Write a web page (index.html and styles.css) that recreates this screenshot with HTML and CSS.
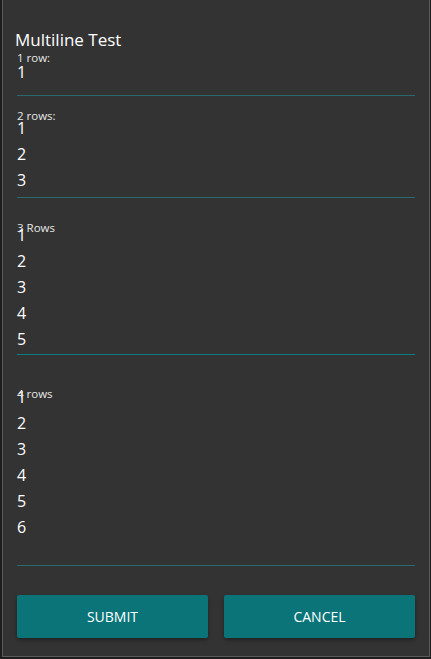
FILE: index.html
```html
<!DOCTYPE html>
<html lang="en">
<head>
<meta charset="utf-8">
<title>Multiline Test</title>
<link rel="stylesheet" href="styles.css">
</head>
<body>
<div class="window">
  <div class="title">Multiline Test</div>

  <div class="field field-1">
    <div class="label label-1">1 row:</div>
    <div class="value">
      <div class="line">1</div>
    </div>
  </div>

  <div class="field field-2">
    <div class="label label-2">2 rows:</div>
    <div class="value">
      <div class="line">1</div>
      <div class="line">2</div>
      <div class="line">3</div>
    </div>
  </div>

  <div class="field field-3 focused">
    <div class="label label-3">3 Rows</div>
    <div class="value">
      <div class="line">1</div>
      <div class="line">2</div>
      <div class="line">3</div>
      <div class="line">4</div>
      <div class="line">5</div>
    </div>
  </div>

  <div class="field field-4">
    <div class="label label-4">4 rows</div>
    <div class="value">
      <div class="line">1</div>
      <div class="line">2</div>
      <div class="line">3</div>
      <div class="line">4</div>
      <div class="line">5</div>
      <div class="line">6</div>
    </div>
  </div>

  <div class="actions">
    <button class="btn">SUBMIT</button>
    <button class="btn">CANCEL</button>
  </div>
</div>
</body>
</html>
```

FILE: styles.css
```css
* {
  box-sizing: border-box;
}

html, body {
  margin: 0;
  padding: 0;
  background: #1e1e1e;
}

body {
  font-family: "Open Sans", "Noto Sans", sans-serif;
  color: #ffffff;
  width: 431px;
  height: 659px;
  overflow: hidden;
}

.window {
  margin-left: 2px;
  width: 428px;
  height: 657px;
  background: #333333;
  border-left: 1px solid #5a5a5a;
  border-right: 1px solid #5a5a5a;
  border-bottom: 1px solid #5a5a5a;
  padding: 27px 14px 0 14px;
  display: flex;
  flex-direction: column;
}

.title {
  font-size: 17px;
  line-height: 24px;
  height: 24px;
  margin-left: -2px;
  padding-top: 1px;
  color: #ffffff;
}

.field {
  position: relative;
  border-bottom: 1px solid #2a6a6d;
}

.field.focused {
  border-bottom-color: #0b7d82;
}

.field-1 { padding: 8px 0 10px; }
.field-2 { padding: 19px 0 4px; }
.field-3 { padding: 24px 0 2px; }
.field-4 { padding: 29px 0 25px; }

.label {
  position: absolute;
  left: 0;
  font-size: 11.5px;
  line-height: 14px;
  color: #e6e6e6;
}

.label-1 { top: 0; }
.label-2 { top: 13px; }
.label-3 { top: 23px; }
.label-4 { top: 32px; }

.line {
  font-size: 16px;
  line-height: 26px;
  height: 26px;
  color: #ffffff;
}

.actions {
  margin-top: 29px;
  display: flex;
  gap: 16px;
}

.btn {
  flex: 1;
  height: 43px;
  border: none;
  border-radius: 2px;
  background: #0a7479;
  color: #ffffff;
  font-family: "Open Sans", "Noto Sans", sans-serif;
  font-size: 14px;
  box-shadow: 0 2px 4px rgba(0, 0, 0, 0.35);
  padding: 0;
}
```
